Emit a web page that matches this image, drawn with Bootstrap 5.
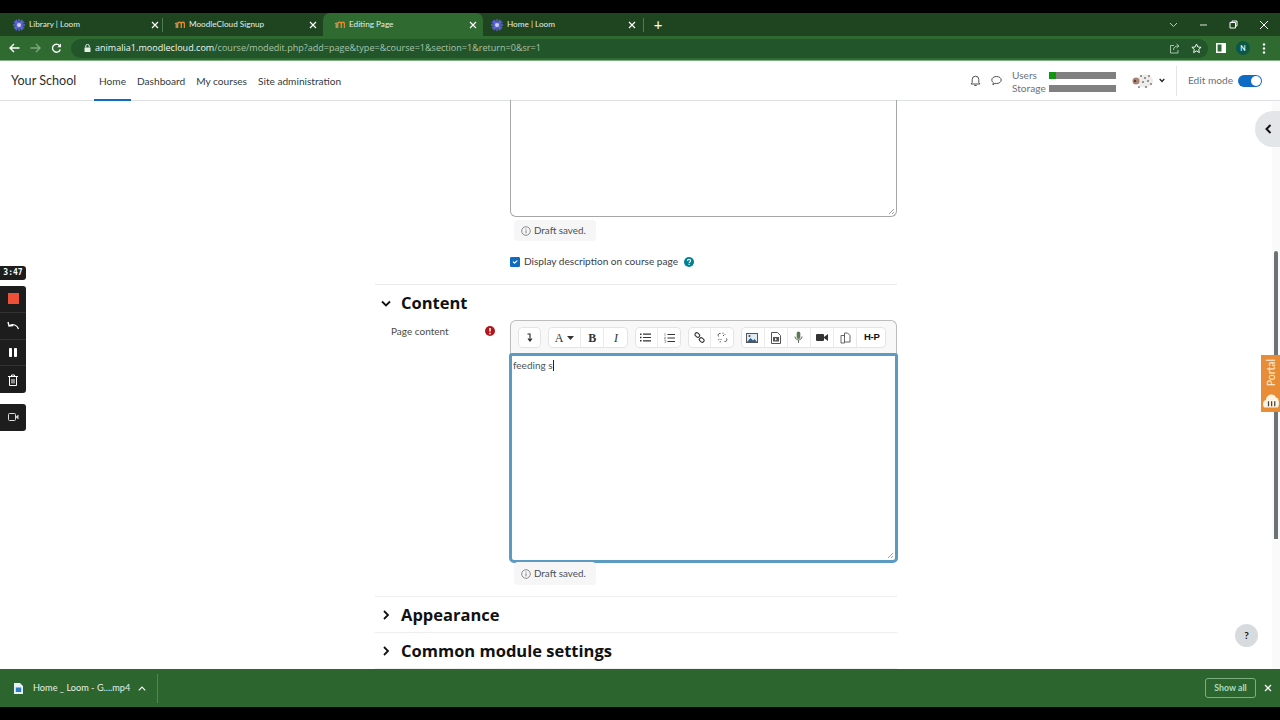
<!DOCTYPE html>
<html lang="en">
<head>
<meta charset="UTF-8">
<title>Editing Page</title>
<link rel="stylesheet" href="https://cdn.jsdelivr.net/npm/bootstrap@5.3.0/dist/css/bootstrap.min.css">
<style>
body { height: 720px; overflow: hidden; background: #000; font-family: Lato, "Open Sans", sans-serif; color: #1d2125; display: flex; flex-direction: column; }
.top-black { height: 13px; flex: none; }
.bottom-black { height: 13px; flex: none; }

/* browser chrome */
.tab-strip { height: 23px; flex: none; background: #1e451f; display: flex; padding-left: 2px; color: #e4ece4; font-size: 8.2px; }
.chrome-tab { width: 160px; height: 23px; display: flex; align-items: center; padding: 0 6px 0 11px; gap: 4px; position: relative; }
.chrome-tab:first-child { padding-right: 3px; }
.chrome-tab.active { background: #2f6a31; border-radius: 7px 7px 0 0; }
.chrome-tab.last-tab { padding-left: 8px; padding-right: 7px; }
.chrome-tab .tab-name { flex: 1; }
.tab-sep { width: 1px; height: 14px; background: #4d7a4e; align-self: center; flex: none; }
.new-tab { width: 22px; font-size: 15px; color: #fff; text-align: center; line-height: 22px; margin-left: 3px; }
.win-btns { margin-left: auto; display: flex; align-items: center; gap: 21px; padding-right: 11px; }
.tool-strip { height: 25px; flex: none; background: #2f6a31; display: flex; align-items: center; padding: 0 14px 0 9px; border-bottom: 1px solid #7fb081; }
.nav-arrow { margin-left: 10px; }
.url-pill { flex: 1; height: 19px; margin-left: 9px; background: #22552a; border-radius: 10px; display: flex; align-items: center; padding: 0 6px 0 13px; font-family: "Open Sans", sans-serif; font-size: 9.05px; color: #a7c4a8; }
.url-pill b { font-weight: 400; color: #eef5ee; }
.url-star { margin-left: 11px; }
.panel-icon { margin-left: 8px; }
.avatar-n { width: 14px; height: 14px; border-radius: 50%; background: #0c5746; color: #e6f2ee; font-size: 7px; line-height: 14px; text-align: center; font-weight: 700; margin-left: 10px; }
.menu-dots { margin-left: 12px; }

/* moodle page */
.page-area { flex: 1; background: #fff; position: relative; overflow: hidden; display: flex; flex-direction: column; }
.site-nav { height: 40px; flex: none; border-bottom: 1px solid #dee2e6; padding: 0 18px 0 11px; font-size: 10.15px; color: #343a40; }
.school-name { font-size: 12.6px; width: 88px; color: #2b2f33; padding-top: 1px; }
.site-nav .nav-link { color: #343a40; padding: 0; height: 39px; line-height: 41px; margin-right: 11px; position: relative; }
.site-nav .nav-link.active::after { content: ""; position: absolute; left: -5px; right: -5px; bottom: -1px; height: 2px; background: #0f6cbf; }
.chat-icon { margin-left: 10px; }
.usage-box { color: #6a737b; line-height: 13px; width: 104px; margin-left: 10px; padding-top: 2px; }
.usage-row { display: flex; align-items: center; justify-content: space-between; }
.usage-bar { width: 67px; height: 7px; background: #808080; }
.usage-bar span { display: block; height: 7px; background: #0f9610; }
.user-pic { margin-left: 15px; }
.edit-switch { border-left: 1px solid #e3e6e8; height: 30px; margin-left: 11px; padding-left: 11px; display: flex; align-items: center; gap: 5px; color: #5c7385; }
.edit-toggle { width: 24px; height: 12px; background: #0f6cc4; border-radius: 6px; position: relative; }
.edit-toggle::after { content: ""; position: absolute; right: 1px; top: 1px; width: 10px; height: 10px; background: #fff; border-radius: 50%; }

.form-col { width: 522px; margin-left: 375px; margin-top: -1px; }
.field-right { margin-left: 135px; width: 387px; }
.desc-box { height: 117px; border: 1px solid #a4a8ab; border-top: 0; border-radius: 0 0 6px 6px; position: relative; }
.resize-mark { position: absolute; right: 1px; bottom: 1px; }
.draft-pill { width: 82px; height: 21px; margin: 3px 0 0 4px; background: #f6f6f6; border-radius: 4px; font-size: 9.8px; color: #4a5056; display: flex; align-items: center; gap: 3px; padding-left: 7px; position: relative; }
.desc-check { margin-top: 15px; height: 12px; font-size: 10.1px; color: #3b4046; display: flex; align-items: center; }
.desc-check .form-check-input { width: 10px; height: 10px; margin: 0 4px 0 0; border-radius: 1px; background-color: #0f6cbf; border-color: #0f6cbf; }
.help-icon { margin-left: 6px; }
.fold-head { display: flex; align-items: center; font-family: "Open Sans", sans-serif; font-weight: 700; color: #111; font-size: 16.5px; }
.fold-head svg { margin: 0 10px 0 6px; }
.content-head { border-top: 1px solid #e9ecef; margin-top: 16px; height: 36px; padding-top: 2px; }
.page-content-row { position: relative; }
.page-label { position: absolute; left: 16px; top: 4px; font-size: 10px; color: #4b4a3e; }
.req-icon { position: absolute; left: 110px; top: 6px; }
.tool-wrap { height: 35px; background: #f8f8f8; border: 1px solid #bcbcbc; border-bottom: 0; border-radius: 6px 6px 0 0; display: flex; gap: 7px; padding: 6px 0 0 7px; }
.tool-grp { display: flex; height: 21px; background: #fff; outline: 1px solid #e4e4e4; outline-offset: -1px; border-radius: 4px; }
.tool-btn { width: 23.2px; display: flex; align-items: center; justify-content: center; border-right: 1px solid #eaeaea; color: #333; font-family: "Liberation Serif", serif; font-size: 12px; }
.tool-btn:last-child { border-right: 0; }
.tool-btn.wide { width: 33px; gap: 3px; }
.tool-btn.hp-btn { width: 29px; }
.hp-mark { font-family: "Liberation Sans", sans-serif; font-weight: 700; font-size: 9.5px; color: #111; letter-spacing: -.3px; }
.editor-box { height: 210px; margin: -2px -1px 0 -1px; border: 3px solid #5b9bc2; border-radius: 3px 3px 5px 5px; position: relative; padding: 2px 1px; font-size: 10px; color: #4f5358; line-height: 15px; }
.caret-bar { display: inline-block; width: 1px; height: 11px; background: #222; vertical-align: -2px; }
.draft-over { margin-top: -1px; height: 23px; }
.fold-row { border-top: 1px solid #eceeef; height: 36px; padding-top: 1px; }
.fold-first { margin-top: 11px; }

/* things lying over the page */
.rec-stack { position: absolute; left: 0; top: 205px; width: 26px; color: #fff; }
.rec-time { height: 14px; background: #1d1d1d; border-radius: 0 3px 3px 0; font: 700 8px/14px "DejaVu Sans Mono", monospace; text-align: center; margin-bottom: 6px; }
.rec-panel { background: #1d1d1d; border-radius: 0 3px 3px 0; }
.rec-cell { height: 26.75px; display: flex; align-items: center; justify-content: center; border-bottom: 1px solid #333; }
.rec-cell:last-child { border-bottom: 0; }
.rec-panel.cam { margin-top: 11px; }
.drawer-btn { position: absolute; right: 0; top: 50px; width: 25px; height: 36px; background: #e3e6e8; border-radius: 18px 0 0 18px; display: flex; align-items: center; padding-left: 10px; }
.scroll-track { position: absolute; right: 0; top: 40px; bottom: 0; width: 8px; background: #fafafb; }
.scroll-thumb { position: absolute; right: 2px; top: 190px; width: 4px; height: 288px; background: #6b7375; border-radius: 2px 2px 0 0; }
.portal-tab { position: absolute; right: 0; top: 294px; width: 19px; height: 57px; background: #e88d36; display: flex; flex-direction: column; align-items: center; justify-content: flex-end; gap: 4px; padding-bottom: 2px; }
.portal-tab span { writing-mode: vertical-rl; transform: rotate(180deg); color: #fdeedd; font-size: 10.5px; line-height: 12px; }
.help-btn { position: absolute; left: 1235px; top: 563px; width: 23px; height: 23px; border-radius: 50%; background: #d8dbde; font-weight: 700; font-size: 10px; line-height: 23px; text-align: center; color: #111; }

/* downloads bar */
.download-bar { height: 38px; flex: none; background: #2c652d; display: flex; align-items: center; padding-left: 14px; color: #e6f0e6; font-size: 9.2px; }
.dl-name { margin-left: 10px; width: 94px; white-space: nowrap; }
.dl-sep { width: 1px; height: 29px; background: #58835a; margin-left: 11px; }
.dl-chev { margin-left: 11px; }
.show-all { margin-left: auto; height: 20px; width: 51px; padding: 0; border: 1px solid #7db080; border-radius: 3px; color: #a8dcc0; font-size: 8.8px; font-weight: 700; background: transparent; }
.dl-close { margin: 0 8px 0 8px; }
</style>
</head>
<body>
<svg width="0" height="0" class="position-absolute">
  <symbol id="loom" viewBox="0 0 12 12">
    <g stroke="#5d63d8" stroke-width="1.3">
      <path d="M6 0v12M0 6h12M1.8 1.8l8.4 8.4M10.2 1.8l-8.4 8.4M3.2.7l5.6 10.6M8.8.7L3.2 11.3M.7 3.2l10.6 5.6M.7 8.8l10.6-5.6"/>
    </g>
    <circle cx="6" cy="6" r="2" fill="#cfd0f5"/>
  </symbol>
  <symbol id="mlogo" viewBox="0 0 12 10">
    <path d="M4 9V4.500C4 3 5.200 2.500 6.200 2.500S8 3.300 8 4.500V9M8 4.500C8 3 9 2.500 9.800 2.500S11.500 3.300 11.500 4.500V9" fill="none" stroke="#e8872c" stroke-width="1.500"/>
    <path d="M.5 4L3 2.600V9H1.700V4.500z" fill="#c9a46a"/>
  </symbol>
  <symbol id="info" viewBox="0 0 10 10">
    <circle cx="5" cy="5" r="4.300" fill="none" stroke="#7b7f83" stroke-width=".9"/>
    <path d="M5 4.300v3M5 2.500v1" stroke="#7b7f83" stroke-width="1"/>
  </symbol>
  <symbol id="chev-r" viewBox="0 0 8 10"><path d="M2 1l4 4-4 4" fill="none" stroke="#111" stroke-width="1.800"/></symbol>
</svg>

<div class="top-black"></div>

<div class="tab-strip">
  <div class="chrome-tab"><svg width="12" height="12"><use href="#loom"/></svg><span class="tab-name">Library | Loom</span><svg width="8" height="8" viewBox="0 0 8 8"><path d="M1 1l6 6M7 1L1 7" stroke="#fff" stroke-width="1.200"/></svg></div>
  <div class="tab-sep"></div>
  <div class="chrome-tab"><svg width="11" height="9"><use href="#mlogo"/></svg><span class="tab-name">MoodleCloud Signup</span><svg width="8" height="8" viewBox="0 0 8 8"><path d="M1 1l6 6M7 1L1 7" stroke="#fff" stroke-width="1.200"/></svg></div>
  <div class="chrome-tab active"><svg width="11" height="9"><use href="#mlogo"/></svg><span class="tab-name">Editing Page</span><svg width="8" height="8" viewBox="0 0 8 8"><path d="M1 1l6 6M7 1L1 7" stroke="#fff" stroke-width="1.200"/></svg></div>
  <div class="chrome-tab last-tab"><svg width="12" height="12"><use href="#loom"/></svg><span class="tab-name">Home | Loom</span><svg width="8" height="8" viewBox="0 0 8 8"><path d="M1 1l6 6M7 1L1 7" stroke="#fff" stroke-width="1.200"/></svg></div>
  <div class="tab-sep"></div>
  <div class="new-tab">+</div>
  <div class="win-btns">
    <svg width="9" height="6" viewBox="0 0 9 6"><path d="M1 1l3.500 3.500L8 1" fill="none" stroke="#b9cbb9" stroke-width="1"/></svg>
    <svg width="9" height="9" viewBox="0 0 9 9"><path d="M1 5h7" stroke="#dfe8df" stroke-width="1"/></svg>
    <svg width="9" height="9" viewBox="0 0 9 9"><path d="M1 2.500h5.500V8H1zM3 2.500V1h5v5H6.500" fill="none" stroke="#fff" stroke-width="1"/></svg>
    <svg width="10" height="10" viewBox="0 0 10 10"><path d="M1 1l8 8M9 1L1 9" stroke="#fff" stroke-width="1"/></svg>
  </div>
</div>

<div class="tool-strip">
  <svg width="11" height="10" viewBox="0 0 11 10"><path d="M10.500 5H1.500M5 1L1 5l4 4" fill="none" stroke="#fff" stroke-width="1.400"/></svg>
  <svg class="nav-arrow" width="11" height="10" viewBox="0 0 11 10"><path d="M.5 5h9M6 1l4 4-4 4" fill="none" stroke="#7fa880" stroke-width="1.400"/></svg>
  <svg class="nav-arrow" width="11" height="11" viewBox="0 0 11 11"><path d="M9.300 6.500A4 4 0 1 1 8.500 2.500" fill="none" stroke="#fff" stroke-width="1.400"/><path d="M10 .5v3.700H6.300z" fill="#fff"/></svg>
  <div class="url-pill">
    <svg class="me-1" width="7" height="8" viewBox="0 0 7 8"><rect x=".5" y="3.500" width="6" height="4.500" fill="#e6efe6"/><path d="M1.800 3.500V2a1.700 1.700 0 0 1 3.400 0v1.500" fill="none" stroke="#e6efe6"/></svg>
    <span><b>animalia1.moodlecloud.com</b>/course/modedit.php?add=page&amp;type=&amp;course=1&amp;section=1&amp;return=0&amp;sr=1</span>
    <svg class="ms-auto" width="11" height="11" viewBox="0 0 11 11"><path d="M5 2.500H1.500v7.500h7.500V7M4.500 7c0-3 2-4 5-4M7.500 1l2.500 2-2.500 2" fill="none" stroke="#b4ccb5" stroke-width=".9"/></svg>
    <svg class="url-star" width="11" height="11" viewBox="0 0 11 11"><path d="M5.500 1l1.400 3 3.200.3-2.400 2.100.7 3.200-2.900-1.700-2.900 1.700.7-3.200L.9 4.300 4.100 4z" fill="none" stroke="#eef5ee" stroke-width="1"/></svg>
  </div>
  <svg class="panel-icon" width="10" height="10" viewBox="0 0 10 10"><path d="M.8.800h8.400v8.400H.8z" fill="none" stroke="#fff" stroke-width="1.500"/><rect x="5.500" y="1" width="3.500" height="8" fill="#fff"/></svg>
  <div class="avatar-n">N</div>
  <svg class="menu-dots" width="4" height="11" viewBox="0 0 4 11"><circle cx="2" cy="1.500" r="1.200" fill="#fff"/><circle cx="2" cy="5.500" r="1.200" fill="#fff"/><circle cx="2" cy="9.500" r="1.200" fill="#fff"/></svg>
</div>

<div class="page-area">
  <nav class="site-nav d-flex align-items-center">
    <div class="school-name">Your School</div>
    <ul class="nav flex-nowrap">
      <li class="nav-item"><a class="nav-link active" href="#">Home</a></li>
      <li class="nav-item"><a class="nav-link" href="#">Dashboard</a></li>
      <li class="nav-item"><a class="nav-link" href="#">My courses</a></li>
      <li class="nav-item"><a class="nav-link" href="#">Site administration</a></li>
    </ul>
    <div class="ms-auto d-flex align-items-center">
      <svg width="11" height="12" viewBox="0 0 11 12"><path d="M1 9h9L8.800 7.500V4.500a3.300 3.300 0 0 0-6.600 0v3zM4.300 10.500h2.400" fill="none" stroke="#4a4f55" stroke-width="1"/></svg>
      <svg class="chat-icon" width="11" height="11" viewBox="0 0 11 11"><path d="M5.500 1.500c2.700 0 4.700 1.500 4.700 3.500S8.200 8.500 5.500 8.500c-.6 0-1.100-.1-1.600-.2L2 10l.3-2.500C1.300 6.800.8 6 .8 5c0-2 2-3.500 4.700-3.500z" fill="none" stroke="#4a4f55" stroke-width="1"/></svg>
      <div class="usage-box">
        <div class="usage-row"><span>Users</span><div class="usage-bar"><span style="width:11%"></span></div></div>
        <div class="usage-row"><span>Storage</span><div class="usage-bar"></div></div>
      </div>
      <svg class="user-pic" width="24" height="18" viewBox="0 0 24 18"><ellipse cx="14" cy="9" rx="8" ry="6.500" fill="#eeecea"/><circle cx="5" cy="9" r="3.500" fill="#a98474"/><circle cx="4" cy="9" r="1.200" fill="#5b4038"/><g fill="#6d6d6d"><circle cx="10" cy="4" r=".9"/><circle cx="14" cy="6" r=".9"/><circle cx="18" cy="4" r=".9"/><circle cx="12" cy="10" r=".9"/><circle cx="17" cy="9" r=".9"/><circle cx="20" cy="12" r=".9"/><circle cx="8" cy="15" r=".9"/><circle cx="15" cy="15" r=".9"/></g></svg>
      <svg class="ms-1" width="6" height="5" viewBox="0 0 6 5"><path d="M.7 1l2.300 2.500L5.300 1" fill="none" stroke="#222" stroke-width="1.300"/></svg>
      <div class="edit-switch"><span>Edit mode</span><div class="edit-toggle"></div></div>
    </div>
  </nav>

  <div class="form-col">
    <div class="field-right">
      <div class="desc-box">
        <svg class="resize-mark" width="7" height="7" viewBox="0 0 7 7"><path d="M1 6l5-5M4 6l2-2" stroke="#888" stroke-width=".8"/></svg>
      </div>
      <div class="draft-pill"><svg width="10" height="10"><use href="#info"/></svg>Draft saved.</div>
      <div class="desc-check">
        <input class="form-check-input" type="checkbox" checked>
        <span>Display description on course page</span>
        <svg class="help-icon" width="10" height="10" viewBox="0 0 10 10"><circle cx="5" cy="5" r="5" fill="#008196"/><path d="M3.500 3.900c0-2 3.100-2 3.100-.1 0 1.200-1.500 1.100-1.500 2.400M5.100 7v1" fill="none" stroke="#fff" stroke-width="1.100"/></svg>
      </div>
    </div>

    <div class="fold-head content-head">
      <svg width="10" height="8" viewBox="0 0 10 8"><path d="M1 1.500l4 4 4-4" fill="none" stroke="#111" stroke-width="1.800"/></svg>Content
    </div>

    <div class="page-content-row">
      <div class="page-label">Page content</div>
      <svg class="req-icon" width="10" height="10" viewBox="0 0 10 10"><circle cx="5" cy="5" r="5" fill="#b3161c"/><path d="M5 2v3.500M5 6.800v1.400" stroke="#fff" stroke-width="1.500"/></svg>
      <div class="field-right">
        <div class="tool-wrap">
          <div class="tool-grp">
            <div class="tool-btn"><svg width="8" height="9" viewBox="0 0 8 9"><path d="M1.500 1H4v6M2 5.500L4 8l2-2.500" fill="none" stroke="#222" stroke-width="1.100"/></svg></div>
          </div>
          <div class="tool-grp">
            <div class="tool-btn wide">A<svg width="7" height="4" viewBox="0 0 7 4"><path d="M0 0h7L3.500 4z" fill="#333"/></svg></div>
            <div class="tool-btn"><b>B</b></div>
            <div class="tool-btn"><i>I</i></div>
          </div>
          <div class="tool-grp">
            <div class="tool-btn"><svg width="11" height="9" viewBox="0 0 11 9"><path d="M3 1.200h8M3 4.500h8M3 7.800h8" stroke="#333" stroke-width="1.200"/><path d="M0 1.200h1.500M0 4.500h1.500M0 7.800h1.500" stroke="#333" stroke-width="1.500"/></svg></div>
            <div class="tool-btn"><svg width="11" height="10" viewBox="0 0 11 10"><path d="M3.500 1.500H11M3.500 5H11M3.500 8.500H11" stroke="#333" stroke-width="1.100"/><path d="M1 0v3M.2 4.300h1.600L.2 6h1.700M.2 7.500h1.600v2.300H.2" fill="none" stroke="#777" stroke-width=".6"/></svg></div>
          </div>
          <div class="tool-grp">
            <div class="tool-btn"><svg width="11" height="11" viewBox="0 0 11 11"><rect x=".8" y="1.200" width="5" height="3.600" rx="1.800" transform="rotate(40 3.300 3)" fill="none" stroke="#333" stroke-width="1.100"/><rect x="5.200" y="6.200" width="5" height="3.600" rx="1.800" transform="rotate(40 7.700 8)" fill="none" stroke="#333" stroke-width="1.100"/></svg></div>
            <div class="tool-btn"><svg width="11" height="11" viewBox="0 0 11 11"><path d="M1.500 4.500C.5 3 1.500 1 3.500 1.500M6 3l1 1M3.500 7l1 1M9.500 6.500c1 1.500 0 3.500-2 3" fill="none" stroke="#555" stroke-width="1"/><path d="M6 .5v1.500M8.500 2L7.500 3M1 8l1.500-.8M3 10.500l.5-1.500" stroke="#555" stroke-width=".8"/></svg></div>
          </div>
          <div class="tool-grp">
            <div class="tool-btn"><svg width="12" height="10" viewBox="0 0 12 10"><rect x=".5" y=".5" width="11" height="9" fill="#dfeaf3" stroke="#555"/><path d="M1 9l3.500-4 2.500 2.500 1.500-1.500L11 9z" fill="#2f5f87"/><circle cx="3.500" cy="3" r="1" fill="#444"/></svg></div>
            <div class="tool-btn"><svg width="10" height="12" viewBox="0 0 10 12"><path d="M.5.500h6l3 3v8h-9z" fill="#fff" stroke="#555"/><rect x="2" y="5" width="6" height="4.500" fill="#555"/><path d="M4 6l2 1.200L4 8.500z" fill="#fff"/></svg></div>
            <div class="tool-btn"><svg width="9" height="13" viewBox="0 0 9 13"><rect x="2.700" y=".5" width="3.600" height="7.500" rx="1.800" fill="#5f7a52"/><path d="M1 5.500c0 4.500 7 4.500 7 0M4.500 9v3" fill="none" stroke="#666" stroke-width="1"/></svg></div>
            <div class="tool-btn"><svg width="12" height="9" viewBox="0 0 12 9"><rect y="1" width="8" height="7" rx="1" fill="#333"/><path d="M8 4l4-3v7L8 5z" fill="#333"/></svg></div>
            <div class="tool-btn"><svg width="11" height="12" viewBox="0 0 11 12"><path d="M1 3.500h3.500v7.500H1zM4.500 5V1h3l2.500 2.500V10H4.500" fill="none" stroke="#555" stroke-width=".9"/></svg></div>
            <div class="tool-btn hp-btn"><span class="hp-mark">H-P</span></div>
          </div>
        </div>
        <div class="editor-box">
          feeding s<span class="caret-bar"></span>
          <svg class="resize-mark" width="7" height="7" viewBox="0 0 7 7"><path d="M1 6l5-5M4 6l2-2" stroke="#888" stroke-width=".8"/></svg>
        </div>
        <div class="draft-pill draft-over"><svg width="10" height="10"><use href="#info"/></svg>Draft saved.</div>
      </div>
    </div>

    <div class="fold-head fold-row fold-first"><svg width="10" height="10"><use href="#chev-r"/></svg>Appearance</div>
    <div class="fold-head fold-row"><svg width="10" height="10"><use href="#chev-r"/></svg>Common module settings</div>
    <div class="fold-row"></div>
  </div>

  <div class="scroll-track"></div>
  <div class="scroll-thumb"></div>
  <div class="drawer-btn"><svg width="7" height="10" viewBox="0 0 7 10"><path d="M5.500 1l-4 4 4 4" fill="none" stroke="#111" stroke-width="2"/></svg></div>
  <div class="portal-tab">
    <span>Portal</span>
    <svg width="18" height="20" viewBox="0 0 14 16"><path d="M2 14c-2 0-2-6 1-6 0-5 7-6 8-2 3 0 3 8 1 8z" fill="#fff3e3"/><path d="M5 13V9M7.500 13V9M10 13V9" stroke="#444" stroke-width="1"/></svg>
  </div>
  <div class="help-btn">?</div>

  <div class="rec-stack">
    <div class="rec-time">3:47</div>
    <div class="rec-panel">
      <div class="rec-cell"><svg width="11" height="11"><rect width="11" height="11" fill="#ef4f36"/></svg></div>
      <div class="rec-cell"><svg width="12" height="9" viewBox="0 0 12 9"><path d="M11.500 8C10 3.500 6 3 2.500 4.500M1 1l1 4 4-.5" fill="none" stroke="#fff" stroke-width="1.300"/></svg></div>
      <div class="rec-cell"><svg width="8" height="9" viewBox="0 0 8 9"><rect width="3" height="9" rx=".7" fill="#fff"/><rect x="5" width="3" height="9" rx=".7" fill="#fff"/></svg></div>
      <div class="rec-cell"><svg width="10" height="12" viewBox="0 0 10 12"><path d="M0 2.500h10M3.500 2.500V1h3v1.500M1.500 2.500v9h7v-9M4 5v4.500M6 5v4.500" fill="none" stroke="#fff" stroke-width="1"/></svg></div>
    </div>
    <div class="rec-panel cam">
      <div class="rec-cell"><svg width="11" height="8" viewBox="0 0 11 8"><rect x=".5" y=".5" width="7" height="7" rx="1" fill="none" stroke="#ddd"/><path d="M8 3.500L10.500 1.500v5L8 4.500z" fill="#ddd"/></svg></div>
    </div>
  </div>
</div>

<div class="download-bar">
  <svg width="9" height="11" viewBox="0 0 9 11"><path d="M0 0h6l3 3v8H0z" fill="#e8eff6"/><rect x="1.800" y="4.500" width="5.400" height="4.500" fill="#2d7cc0"/></svg>
  <span class="dl-name">Home _ Loom - G....mp4</span>
  <svg class="dl-chev" width="8" height="5" viewBox="0 0 8 5"><path d="M.8 4.300L4 1l3.200 3.300" fill="none" stroke="#fff" stroke-width="1.100"/></svg>
  <div class="dl-sep"></div>
  <button class="btn show-all" type="button">Show all</button>
  <svg class="dl-close" width="8" height="8" viewBox="0 0 8 8"><path d="M1 1l6 6M7 1L1 7" stroke="#fff" stroke-width="1.300"/></svg>
</div>
<div class="bottom-black"></div>

<script src="https://cdn.jsdelivr.net/npm/bootstrap@5.3.0/dist/js/bootstrap.bundle.min.js"></script>
</body>
</html>
